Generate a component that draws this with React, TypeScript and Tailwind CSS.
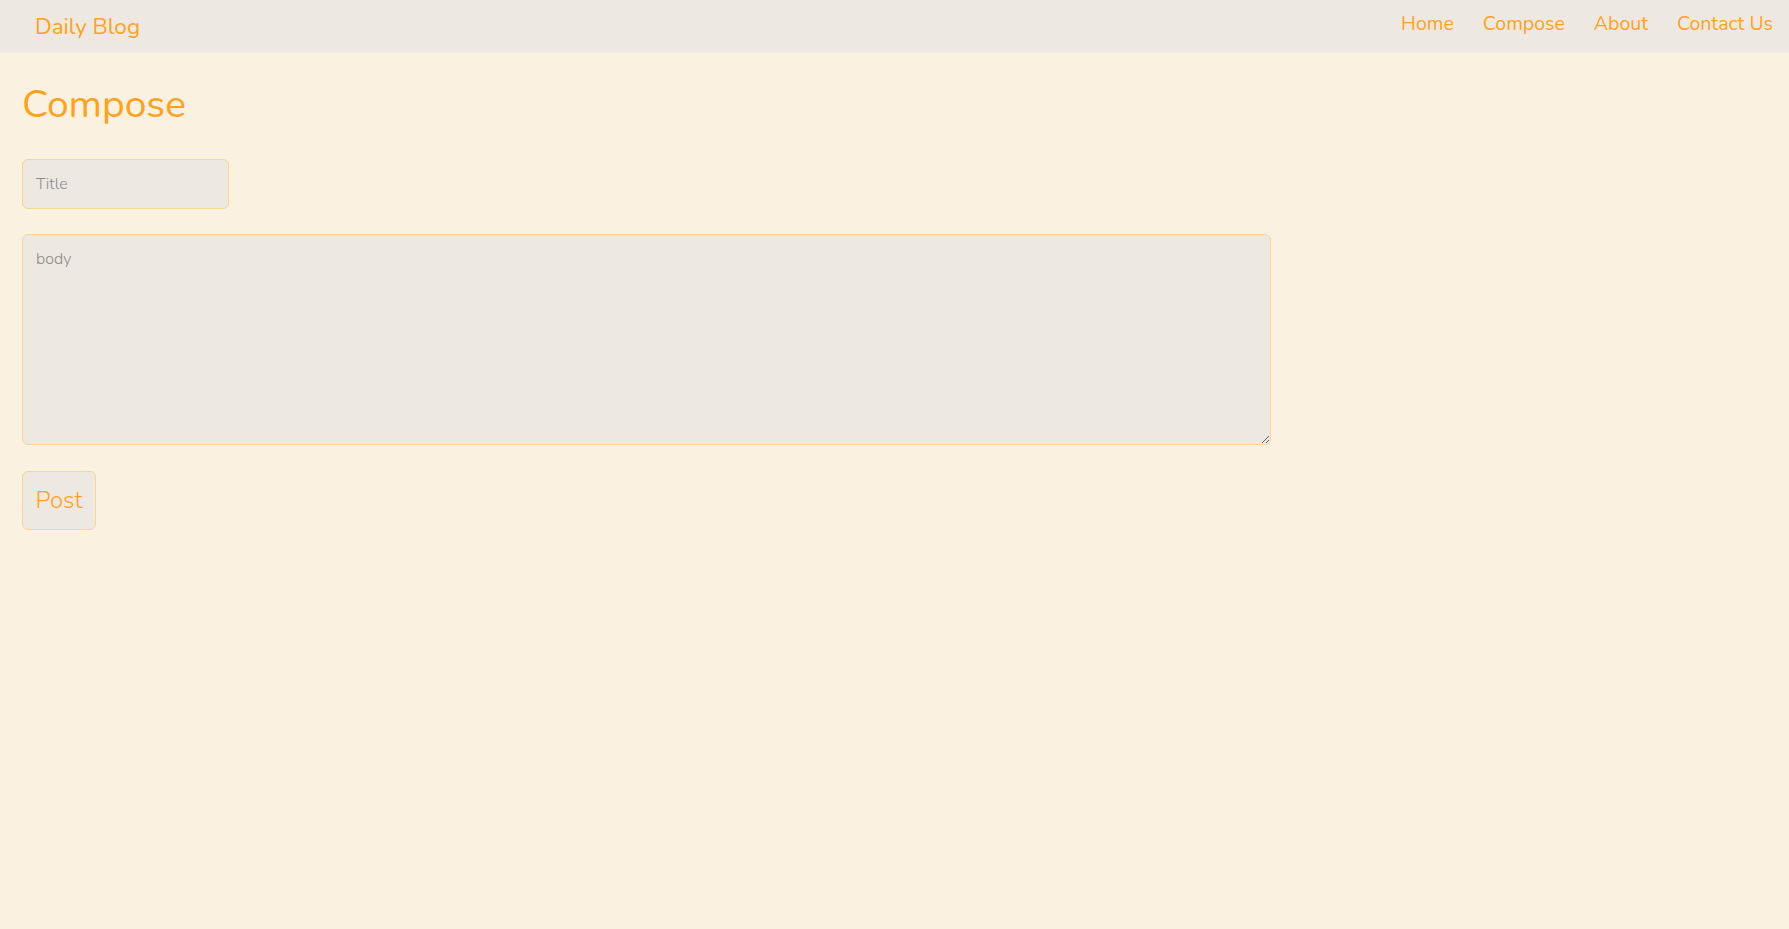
import React from "react";

export default function App() {
  return (
    <div
      className="min-h-[929px] w-full bg-[#fbf1e0]"
      style={{ fontFamily: "Nunito, Lato, 'Open Sans', sans-serif" }}
    >
      <nav className="flex h-[53px] items-center justify-between bg-[#eee8e3] pl-[35px] pr-[16px]">
        <a className="text-[22.5px] leading-none text-[#ffa21a] mt-[1px]">Daily Blog</a>
        <div className="flex items-center gap-[29px] text-[19.5px] text-[#ffa21a] -mt-[5px]">
          <a>Home</a>
          <a>Compose</a>
          <a>About</a>
          <a>Contact Us</a>
        </div>
      </nav>
      <div className="px-[22px]">
        <h1 className="mt-[29px] text-[39px] leading-[1.2] text-[#ffa21a]">Compose</h1>
        <div className="mt-[30px]">
          <input
            placeholder="Title"
            className="block h-[50px] w-[207px] rounded-[6px] border border-[#fcd68a] bg-[#eee8e3] px-[13px] text-[16px] font-light outline-none placeholder:text-[#8a8a8a]"
          />
        </div>
        <div className="mt-[25px]">
          <textarea
            placeholder="body"
            className="block h-[211px] w-[1249px] rounded-[6px] border border-[#fcd68a] bg-[#eee8e3] px-[13px] py-[12px] text-[16px] font-light outline-none placeholder:text-[#8a8a8a]"
          />
        </div>
        <button className="mt-[26px] h-[59px] w-[74px] rounded-[6px] border border-[#fcd68a] bg-[#eee8e3] text-[24px] font-light text-[#ffa21a]">
          Post
        </button>
      </div>
    </div>
  );
}
